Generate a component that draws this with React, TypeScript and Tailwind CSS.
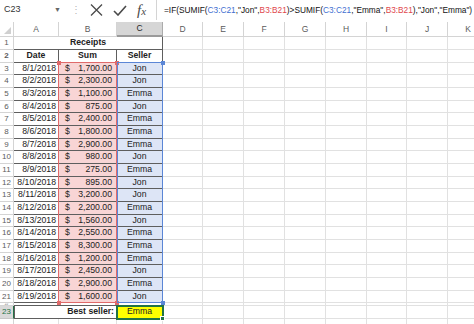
import React from "react";

type Row = { n: number; date: string; sum: string; seller: string };

const data: Row[] = [
  { n: 3, date: "8/1/2018", sum: "1,700.00", seller: "Jon" },
  { n: 4, date: "8/2/2018", sum: "2,300.00", seller: "Jon" },
  { n: 5, date: "8/3/2018", sum: "1,100.00", seller: "Emma" },
  { n: 6, date: "8/4/2018", sum: "875.00", seller: "Jon" },
  { n: 7, date: "8/5/2018", sum: "2,400.00", seller: "Emma" },
  { n: 8, date: "8/6/2018", sum: "1,800.00", seller: "Emma" },
  { n: 9, date: "8/7/2018", sum: "2,900.00", seller: "Emma" },
  { n: 10, date: "8/8/2018", sum: "980.00", seller: "Jon" },
  { n: 11, date: "8/9/2018", sum: "275.00", seller: "Emma" },
  { n: 12, date: "8/10/2018", sum: "895.00", seller: "Jon" },
  { n: 13, date: "8/11/2018", sum: "3,200.00", seller: "Jon" },
  { n: 14, date: "8/12/2018", sum: "2,200.00", seller: "Emma" },
  { n: 15, date: "8/13/2018", sum: "1,560.00", seller: "Jon" },
  { n: 16, date: "8/14/2018", sum: "2,550.00", seller: "Emma" },
  { n: 17, date: "8/15/2018", sum: "8,300.00", seller: "Emma" },
  { n: 18, date: "8/16/2018", sum: "1,200.00", seller: "Emma" },
  { n: 19, date: "8/17/2018", sum: "2,450.00", seller: "Jon" },
  { n: 20, date: "8/18/2018", sum: "2,900.00", seller: "Emma" },
  { n: 21, date: "8/19/2018", sum: "1,600.00", seller: "Jon" },
];

const letters = ["A", "B", "C", "D", "E", "F", "G", "H", "I", "J", "K"];
const colW = [
  "w-[45px]",
  "w-[58px]",
  "w-[46px]",
  "w-[40px]",
  "w-[41px]",
  "w-[41px]",
  "w-[41px]",
  "w-[41px]",
  "w-[40px]",
  "w-[41px]",
  "w-[41px]",
];
// empty columns D..K
const restW = colW.slice(3);

// rows 1..21 alternate 13/13/12 so 21 rows fit 266px
const rowH = (n: number) => (n % 3 === 0 ? "h-[12px]" : "h-[13px]");

const grid = "border-r border-b border-[#e1e1e1]";
const dark = "border-r border-b border-[#5e5e5e]";

function RowNum({ n, active }: { n?: number; active?: boolean }) {
  return (
    <div
      className={`w-[14px] h-full shrink-0 flex items-center justify-center border-r border-b ${
        active
          ? "bg-[#d9d9d9] text-[#217346] border-r-[#217346] border-b-[#c6c6c6]"
          : "bg-white text-[#5b5b5b] border-[#d4d4d4]"
      } text-[8px]`}
    >
      {n}
    </div>
  );
}

function EmptyCells() {
  return (
    <>
      {restW.map((w, i) => (
        <div key={i} className={`${w} h-full shrink-0 ${grid}`} />
      ))}
    </>
  );
}

function Handle({ className }: { className: string }) {
  return <div className={`absolute w-[4px] h-[4px] ${className}`} />;
}

export default function App() {
  return (
    <div className="w-[474px] h-[324px] overflow-hidden bg-white font-['Liberation_Sans',Arial,sans-serif] text-[#222] select-none">
      {/* formula bar */}
      <div className="h-[20px] flex items-center bg-white">
        <div className="w-[64px] h-full flex items-center justify-between pl-[4px] pr-[3px] text-[9px] text-[#333]">
          <span>C23</span>
          <span className="text-[7px] text-[#666]">▼</span>
        </div>
        <div className="w-[24px] flex justify-center text-[#b5b5b5] text-[10px] leading-none">⋮</div>
        <div className="w-[68px] h-full flex items-center gap-[10px] pl-[2px]">
          <svg width="13" height="12" viewBox="0 0 13 12">
            <path d="M1 0.5 L12 11.5 M12 0.5 L1 11.5" stroke="#4a4a4a" strokeWidth="1.3" fill="none" />
          </svg>
          <svg width="14" height="11" viewBox="0 0 14 11">
            <path d="M1 6 L5 10 L13 1" stroke="#4a4a4a" strokeWidth="1.6" fill="none" />
          </svg>
          <span className="font-['Liberation_Serif',serif] italic text-[15px] text-[#4a4a4a] leading-none">
            f<span className="text-[11px]">x</span>
          </span>
        </div>
        <div className="flex-1 h-full flex items-center pl-[7px] border-l border-[#d4d4d4] whitespace-nowrap text-[8.3px] text-[#111] overflow-hidden">
          =IF(SUMIF(<span className="text-[#3f6fd1]">C3:C21</span>,"Jon",
          <span className="text-[#e0464c]">B3:B21</span>)&gt;SUMIF(
          <span className="text-[#3f6fd1]">C3:C21</span>,"Emma",
          <span className="text-[#e0464c]">B3:B21</span>),"Jon","Emma")
        </div>
      </div>
      <div className="h-[2px] bg-white" />

      {/* column headers */}
      <div className="h-[15px] flex text-[8.5px] text-[#5b5b5b]">
        <div className="w-[14px] h-full shrink-0 border-r border-b border-[#d4d4d4] flex items-end justify-end p-[2px]">
          <svg width="7" height="7" viewBox="0 0 7 7">
            <path d="M7 0 L7 7 L0 7 Z" fill="#d0d0d0" />
          </svg>
        </div>
        {letters.map((l, i) => (
          <div
            key={l}
            className={`${colW[i]} h-full shrink-0 flex items-center justify-center border-r ${
              l === "C"
                ? "bg-[#d6d6d6] text-[#262626] border-[#ababab] border-b-2 border-b-[#9a9a9a]"
                : "border-b border-[#d4d4d4]"
            }`}
          >
            {l}
          </div>
        ))}
      </div>

      {/* sheet body */}
      <div className="relative text-[8.7px]">
        {/* row 1 */}
        <div className="h-[13px] flex">
          <RowNum n={1} />
          <div className={`w-[149px] h-full shrink-0 ${dark} flex items-center justify-center font-bold`}>
            Receipts
          </div>
          <EmptyCells />
        </div>
        {/* row 2 */}
        <div className="h-[13px] flex font-bold">
          <RowNum n={2} />
          <div className={`w-[45px] h-full shrink-0 ${dark} flex items-center justify-center`}>Date</div>
          <div className={`w-[58px] h-full shrink-0 ${dark} flex items-center justify-center`}>Sum</div>
          <div className={`w-[46px] h-full shrink-0 ${dark} flex items-center justify-center`}>Seller</div>
          <EmptyCells />
        </div>
        {/* data rows */}
        {data.map((r) => (
          <div key={r.n} className={`${rowH(r.n)} flex`}>
            <RowNum n={r.n} />
            <div className={`w-[45px] h-full shrink-0 ${dark} flex items-center justify-end pr-[2px]`}>
              {r.date}
            </div>
            <div
              className={`w-[58px] h-full shrink-0 ${dark} bg-[#f8d5d5] flex items-center justify-between pl-[6px] pr-[4px]`}
            >
              <span>$</span>
              <span>{r.sum}</span>
            </div>
            <div className={`w-[46px] h-full shrink-0 ${dark} bg-[#dde5f6] flex items-center justify-center`}>
              {r.seller}
            </div>
            <EmptyCells />
          </div>
        ))}
        {/* row 22 (squeezed) */}
        <div className="h-[3px] flex overflow-hidden">
          <div className="w-[14px] h-full shrink-0 border-r border-b border-[#d4d4d4] overflow-hidden text-[3px] leading-[2px] text-[#5b5b5b] flex justify-center">
            22
          </div>
          <div className={`w-[45px] h-full shrink-0 ${grid}`} />
          <div className={`w-[58px] h-full shrink-0 ${grid}`} />
          <div className={`w-[46px] h-full shrink-0 ${grid}`} />
          <EmptyCells />
        </div>
        {/* row 23 */}
        <div className="h-[13px] flex">
          <RowNum n={23} active />
          <div className="w-[103px] h-[14px] -mt-[1px] shrink-0 border border-[#5e5e5e] flex items-center justify-end pr-[2px] font-bold">
            Best seller:
          </div>
          <div className={`w-[46px] h-full shrink-0 ${grid} bg-[#ffff00] flex items-center justify-center`}>
            Emma
          </div>
          <EmptyCells />
        </div>
        {/* row 24, only its top edge shows */}
        <div className="h-[13px] flex">
          <RowNum />
          <div className={`w-[45px] h-full shrink-0 ${grid}`} />
          <div className={`w-[58px] h-full shrink-0 ${grid}`} />
          <div className={`w-[46px] h-full shrink-0 ${grid}`} />
          <EmptyCells />
        </div>

        {/* formula reference outlines */}
        <div className="absolute left-[58px] top-[25px] w-[59px] h-[241px] border border-[#e06a6a] pointer-events-none">
          <Handle className="-left-[2.5px] -top-[2.5px] bg-[#e06a6a]" />
          <Handle className="-right-[2.5px] -top-[2.5px] bg-[#e06a6a]" />
          <Handle className="-left-[2.5px] -bottom-[2.5px] bg-[#e06a6a]" />
          <Handle className="-right-[2.5px] -bottom-[2.5px] bg-[#e06a6a]" />
        </div>
        <div className="absolute left-[117px] top-[25px] w-[46px] h-[241px] border border-[#5b86d6] pointer-events-none">
          <Handle className="-right-[2.5px] -top-[2.5px] bg-[#5b86d6]" />
          <Handle className="-right-[2.5px] -bottom-[2.5px] bg-[#5b86d6]" />
        </div>

        {/* active cell C23 */}
        <div className="absolute left-[116px] top-[268px] w-[48px] h-[15px] border-2 border-[#217346] pointer-events-none">
          <div className="absolute -right-[3px] -bottom-[3px] w-[5px] h-[5px] bg-[#217346] border border-white" />
        </div>
      </div>
    </div>
  );
}
